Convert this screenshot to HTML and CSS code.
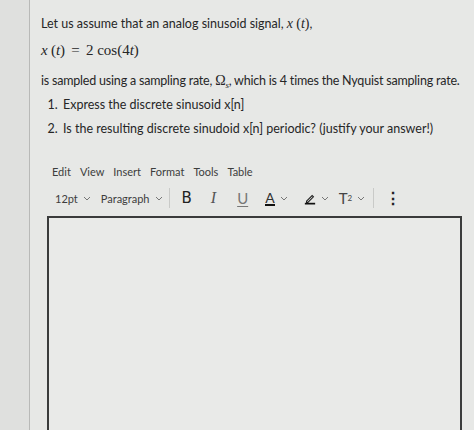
FILE: index.html
```html
<!DOCTYPE html>
<html>
<head>
<meta charset="utf-8">
<link rel="stylesheet" href="styles.css">
</head>
<body>
<div class="page">
  <div class="gutter"></div>
  <div class="content">
    <p class="line l1">Let us assume that an analog sinusoid signal, <span class="m">x</span> <span class="mr">(</span><span class="m">t</span><span class="mr">)</span>,</p>
    <p class="line l2 math"><span class="m">x</span> <span class="mr">(</span><span class="m">t</span><span class="mr">)</span> <span class="mr eq">=</span> <span class="mr">2 cos(4</span><span class="m">t</span><span class="mr">)</span></p>
    <p class="line l3">is sampled using a sampling rate, <span class="mr">Ω</span><sub class="m">s</sub>, which is 4 times the Nyquist sampling rate.</p>
    <ol class="list">
      <li>Express the discrete sinusoid x[n]</li>
      <li>Is the resulting discrete sinudoid x[n] periodic? (justify your answer!)</li>
    </ol>
    <div class="editor">
      <div class="menu">
        <span>Edit</span><span>View</span><span>Insert</span><span>Format</span><span>Tools</span><span>Table</span>
      </div>
      <div class="tools">
        <span class="drop">12pt <svg class="chev" viewBox="0 0 8 5"><path d="M1 1l3 3 3-3"/></svg></span>
        <span class="drop para">Paragraph <svg class="chev" viewBox="0 0 8 5"><path d="M1 1l3 3 3-3"/></svg></span>
        <span class="sep s1"></span>
        <span class="btn b">B</span>
        <span class="btn i">I</span>
        <span class="btn u">U</span>
        <span class="btn a"><span class="aa">A</span><svg class="chev" viewBox="0 0 8 5"><path d="M1 1l3 3 3-3"/></svg></span>
        <span class="btn pen"><svg class="penic" viewBox="0 0 14 14"><path d="M3 10l6.5-6.5 1.5 1.5L4.5 11.5H3z" fill="none" stroke="#222" stroke-width="1.3"/><rect x="1" y="12" width="12" height="2" fill="#111"/></svg><svg class="chev" viewBox="0 0 8 5"><path d="M1 1l3 3 3-3"/></svg></span>
        <span class="btn sup">T<sup>2</sup><svg class="chev" viewBox="0 0 8 5"><path d="M1 1l3 3 3-3"/></svg></span>
        <span class="sep s2"></span>
        <span class="btn more">⋮</span>
      </div>
      <div class="area"></div>
    </div>
  </div>
</div>
</body>
</html>
```
FILE: styles.css
```css
* { box-sizing: border-box; }
html, body { margin: 0; padding: 0; }
body {
  width: 474px;
  height: 430px;
  overflow: hidden;
  background: #e7e8e6;
  font-family: Lato, "Open Sans", sans-serif;
  color: #262626;
}
.page {
  display: flex;
  height: 430px;
  overflow: hidden;
}
.gutter {
  width: 30px;
  flex: none;
  background: #dfe0de;
  border-right: 1px solid #b8b9b7;
}
.content {
  flex: 1;
  min-width: 0;
  padding-left: 11px;
  padding-top: 15px;
}
.line {
  margin: 0;
  font-size: 12.5px;
  line-height: 18px;
  white-space: nowrap;
}
.l2 { margin-top: 8px; }
.l3 { margin-top: 12px; letter-spacing: -0.2px; }
.m {
  font-family: "Liberation Serif", serif;
  font-style: italic;
  font-size: 14px;
}
.mr {
  font-family: "Liberation Serif", serif;
  font-size: 14px;
}
.math .m, .math .mr { font-size: 15px; }
.math .eq { margin: 0 3px; }
sub.m { font-size: 9px; vertical-align: -3px; line-height: 0; }
.list {
  margin: 3px 0 0 0;
  padding-left: 20px;
  font-size: 12.5px;
  line-height: 24px;
}
.list li { padding-left: 2px; }
.editor {
  margin-top: 23px;
  padding-left: 6px;
}
.menu {
  display: flex;
  gap: 9px;
  padding-left: 5px;
  font-size: 11px;
  color: #3d3d3d;
  line-height: 16px;
}
.tools {
  display: flex;
  align-items: center;
  margin-top: 5px;
  height: 26px;
  padding-left: 8px;
  font-size: 11px;
  color: #3d3d3d;
}
.drop { display: flex; align-items: center; }
.para { margin-left: 10px; }
.chev {
  width: 8px;
  height: 5px;
  margin-left: 5px;
  fill: none;
  stroke: #777;
  stroke-width: 1;
}
.sep {
  width: 1px;
  height: 20px;
  background: #c9cac8;
}
.s1 { margin: 0 12px 0 6px; }
.s2 { margin: 0 11px 0 8px; }
.btn {
  display: flex;
  align-items: center;
  color: #222;
}
.b { font-family: "DejaVu Sans", sans-serif; font-size: 15px; }
.i { font-family: "Liberation Serif", serif; font-style: italic; font-size: 16px; margin-left: 19px; color: #555; }
.u { font-size: 15px; margin-left: 21px; color: #777; text-decoration: underline; text-underline-offset: 2px; }
.a { margin-left: 17px; }
.aa { font-size: 14px; color: #333; border-bottom: 2px solid #111; line-height: 13px; }
.pen { margin-left: 16px; }
.penic { width: 12px; height: 13px; }
.sup { margin-left: 10px; font-size: 15px; color: #444; }
.sup sup { font-size: 8px; vertical-align: 7px; line-height: 0; }
.more { font-size: 16px; font-weight: bold; }
.area {
  margin-top: 5px;
  margin-right: 12px;
  height: 260px;
  border: 2px solid #3a3b3b;
  border-bottom: none;
  background: #e9eae8;
}
```
